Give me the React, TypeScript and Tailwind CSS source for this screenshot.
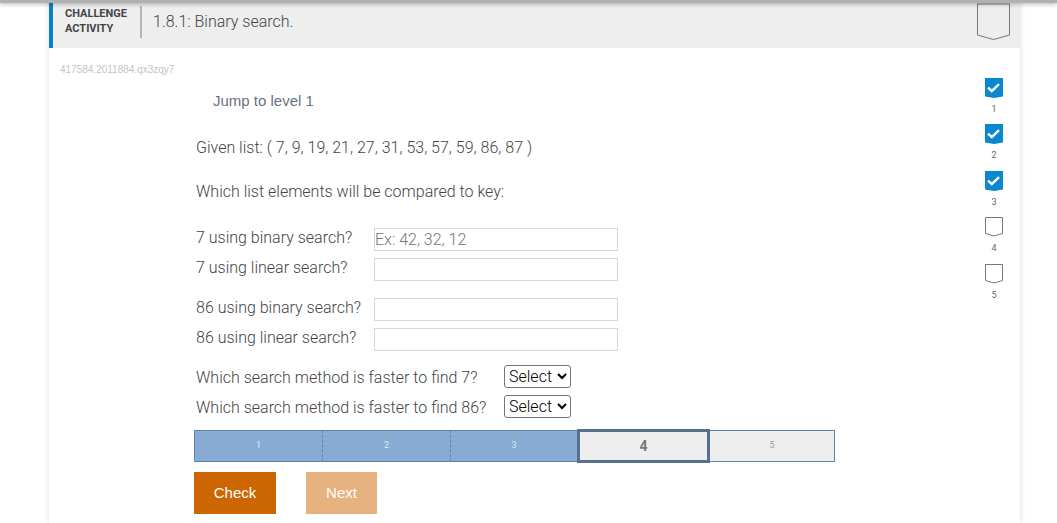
const Shield = ({ big }: { big?: boolean }) => (
  <svg width={big ? 34 : 18} height={big ? 38 : 20} viewBox={big ? "0 0 34 38" : "0 0 18 20"} fill="none">
    {big ? (
      <path d="M0.5 1H32.5V32L16.5 36.5L0.5 32Z" stroke="#777" strokeWidth="1" />
    ) : (
      <path d="M0.5 0.5H17.5V16.5L9 19L0.5 16.5Z" stroke="#777" strokeWidth="1" />
    )}
  </svg>
)

const Checked = () => (
  <svg width="18" height="20" viewBox="0 0 18 20">
    <path d="M0 0H18V18.5L9 20L0 18.5Z" fill="#0a87d1" />
    <path d="M3 9.6L6.8 13L14 6.2" fill="none" stroke="white" strokeWidth="2.4" />
  </svg>
)

const Level = ({ n, done }: { n: number; done?: boolean }) => (
  <div className="flex h-[46.4px] flex-col items-center">
    {done ? <Checked /> : <Shield />}
    <span className="mt-[6px] text-[9px] leading-[10px] text-[#666]">{n}</span>
  </div>
)

const Row = ({ label, placeholder }: { label: string; placeholder?: string }) => (
  <div className="flex h-[23px] items-center">
    <label className="w-[178px] pb-[3px] text-[16px] font-light text-[#444]">{label}</label>
    <input
      placeholder={placeholder}
      className="h-[23px] w-[244px] border border-[#d0d9de] bg-white text-[16px] font-light placeholder:text-[#757575]"
    />
  </div>
)

const Pick = ({ label }: { label: string }) => (
  <div className="flex h-[23px] items-center">
    <label className="w-[308px] pt-[3px] text-[16px] font-light text-[#444]">{label}</label>
    <select className="h-[23px] w-[67px] rounded-[3px] border border-[#767676] bg-white text-[16px] font-light text-black">
      <option>Select</option>
    </select>
  </div>
)

export default function App() {
  return (
    <div className="relative h-[523px] w-[1057px] overflow-hidden bg-white font-['Roboto',sans-serif]">
      <div className="absolute left-0 top-0 z-10 h-[3px] w-full bg-[#b0b0b0] shadow-[0_1px_4px_rgba(0,0,0,0.35)]" />
      <div className="ml-[49px] h-[523px] w-[971px] shadow-[0_0_6px_rgba(0,0,0,0.14)]">
        <div className="flex h-[48px] border-l-4 border-[#0a7fc7] bg-[#eeeeee]">
          <div className="mt-[6px] w-[87px] pl-[12px] text-[11px] font-bold leading-[15px] text-[#444]">
            <div>CHALLENGE</div>
            <div>ACTIVITY</div>
          </div>
          <div className="mt-[6px] h-[32px] w-[2px] bg-[#b5b5b5]" />
          <h2 className="ml-[11px] mt-[11px] flex-1 text-[16px] font-light leading-[22px] text-[#444]">1.8.1: Binary search.</h2>
          <div className="mr-[9px] mt-[3px]">
            <Shield big />
          </div>
        </div>
        <div className="flex">
          <div className="flex-1">
            <div className="pl-[11px] pt-[16px] font-['Liberation_Sans',sans-serif] text-[10px] leading-[12px] text-[#c4c4c4]">417584.2011884.qx3zqy7</div>
            <div className="ml-[164px] mt-[15px] font-['Liberation_Sans',sans-serif] text-[15px] leading-[20px] text-[#6a7280]">Jump to level 1</div>
            <div className="ml-[147px] mt-[27px] text-[16px] font-light leading-[20px] text-[#444]">Given list: ( 7, 9, 19, 21, 27, 31, 53, 57, 59, 86, 87 )</div>
            <div className="ml-[147px] mt-[24px] text-[16px] font-light leading-[20px] text-[#444]">Which list elements will be compared to key:</div>
            <div className="ml-[147px] mt-[26px] flex flex-col gap-[7px]">
              <Row label="7 using binary search?" placeholder="Ex: 42, 32, 12" />
              <Row label="7 using linear search?" />
              <div className="h-[3px]" />
              <Row label="86 using binary search?" />
              <Row label="86 using linear search?" />
              <div className="mt-[7px] flex flex-col gap-[7px]">
                <Pick label="Which search method is faster to find 7?" />
                <Pick label="Which search method is faster to find 86?" />
              </div>
            </div>
            <div className="ml-[145px] mt-[12px] flex h-[32px] w-[641px] items-stretch text-[9px]">
              <div className="flex w-[128px] items-center justify-center border-y border-l border-[#5a86ad] bg-[#87abd2] text-[#dfe8f2]">1</div>
              <div className="flex w-[128px] items-center justify-center border-y border-l border-[#5a86ad] bg-[#87abd2] text-[#dfe8f2] [border-left-style:dashed]">2</div>
              <div className="flex w-[127px] items-center justify-center border-y border-l border-[#5a86ad] bg-[#87abd2] text-[#dfe8f2] [border-left-style:dashed]">3</div>
              <div className="z-[1] -my-[1px] flex w-[133px] items-center justify-center border-[3px] border-[#56708f] bg-[#eeeeee] text-[14px] font-bold text-[#6d7a80]">4</div>
              <div className="flex flex-1 items-center justify-center border-y border-r border-[#5a86ad] bg-[#eeeeee] text-[#999]">5</div>
            </div>
            <div className="ml-[145px] mt-[10px] flex gap-[30px] font-['Liberation_Sans',sans-serif]">
              <button className="h-[42px] w-[82px] bg-[#cc6600] text-[15px] text-white">Check</button>
              <button className="h-[42px] w-[71px] bg-[#e6b280] text-[15px] text-white">Next</button>
            </div>
          </div>
          <div className="mr-[17px] mt-[30px] flex w-[18px] flex-col">
            <Level n={1} done />
            <Level n={2} done />
            <Level n={3} done />
            <Level n={4} />
            <Level n={5} />
          </div>
        </div>
      </div>
    </div>
  )
}
